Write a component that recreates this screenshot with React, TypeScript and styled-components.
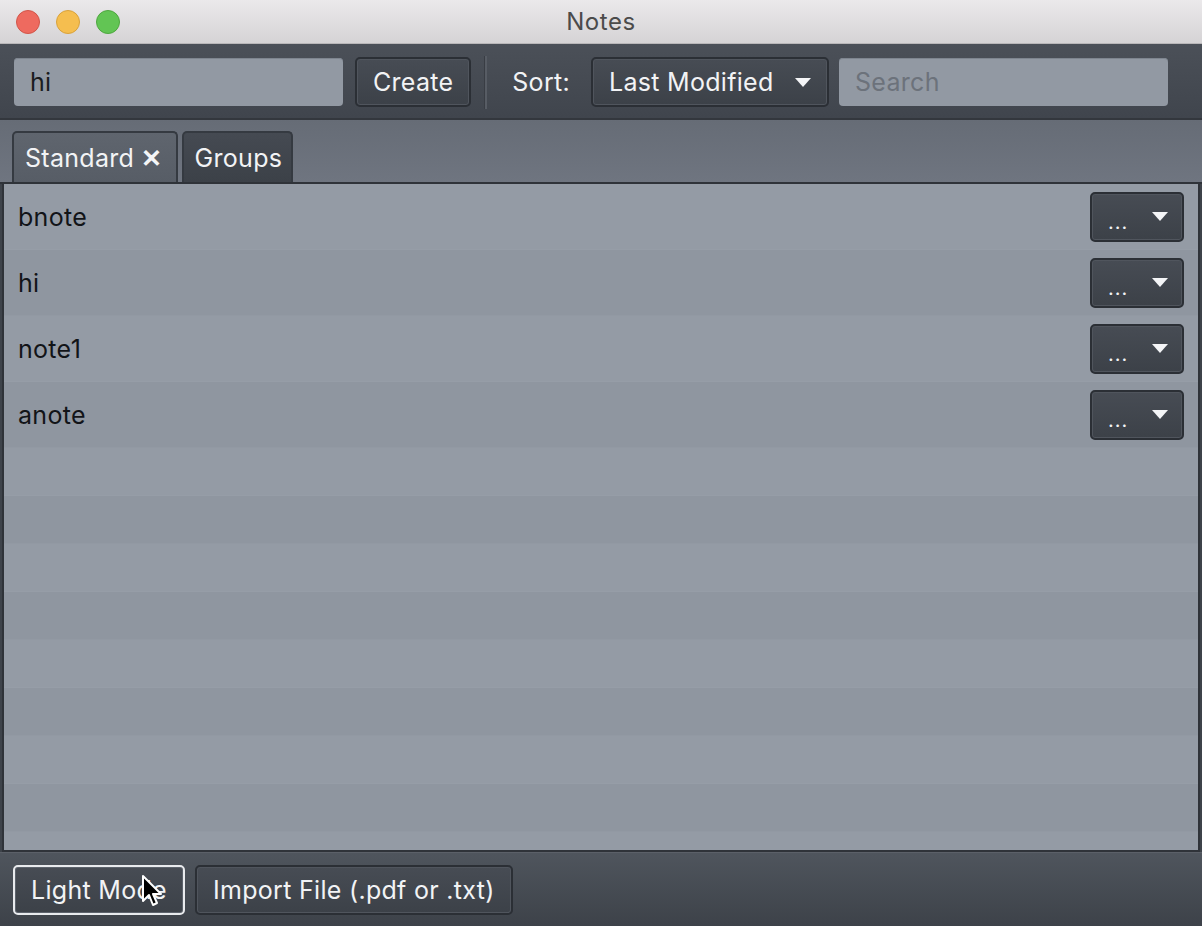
import React from 'react';
import styled, { createGlobalStyle } from 'styled-components';

const GlobalStyle = createGlobalStyle`
  html, body {
    margin: 0;
    padding: 0;
    background: #3e434a;
  }
  * {
    box-sizing: border-box;
  }
`;

const Window = styled.div`
  width: 1202px;
  height: 926px;
  display: flex;
  flex-direction: column;
  font-family: Inter, "Open Sans", sans-serif;
  font-size: 25px;
  letter-spacing: 0.3px;
  overflow: hidden;
  position: relative;
  border-radius: 0 0 10px 10px;
  background: #3e434a;
`;

const TitleBar = styled.div`
  height: 44px;
  flex: none;
  display: flex;
  align-items: center;
  position: relative;
  padding-left: 16px;
  gap: 16px;
  background: linear-gradient(#ebe9eb, #d5d3d5);
  border-bottom: 1px solid #b9b7b9;
`;

const Light = styled.span<{ $color: string; $edge: string }>`
  width: 24px;
  height: 24px;
  border-radius: 50%;
  background: ${(p) => p.$color};
  border: 1px solid ${(p) => p.$edge};
`;

const Title = styled.div`
  position: absolute;
  left: 0;
  right: 0;
  text-align: center;
  font-size: 24px;
  letter-spacing: 0.6px;
  color: #4b4b4b;
  pointer-events: none;
`;

const Toolbar = styled.div`
  height: 76px;
  flex: none;
  display: flex;
  align-items: center;
  padding: 2px 34px 0 14px;
  background: linear-gradient(#4b5058, #40454d);
  border-bottom: 2px solid #33373d;
`;

const Field = styled.div<{ $width: number; $placeholder?: boolean }>`
  width: ${(p) => p.$width}px;
  height: 48px;
  flex: none;
  border-radius: 4px;
  background: #9299a3;
  display: flex;
  align-items: center;
  padding-left: 16px;
  color: ${(p) => (p.$placeholder ? '#6c727b' : '#1a1c20')};
  box-shadow: inset 0 1px 0 #7e858f;
`;

const Button = styled.div<{ $focused?: boolean }>`
  height: 50px;
  flex: none;
  display: flex;
  align-items: center;
  padding: 0 16px;
  border-radius: 5px;
  background: linear-gradient(#474c54, #3c4148);
  border: 2px solid ${(p) => (p.$focused ? '#e9ebee' : '#2b2f35')};
  box-shadow: inset 0 0 0 1px ${(p) => (p.$focused ? '#5d636c' : '#50555d')};
  color: #f2f3f5;
  white-space: nowrap;
`;

const Separator = styled.div`
  width: 4px;
  height: 53px;
  margin: 0 25px 0 13px;
  background: #575c64;
  border-left: 1px solid #393d44;
`;

const Label = styled.span`
  color: #f2f3f5;
  margin-right: 21px;
`;

const Select = styled(Button)`
  width: 238px;
  justify-content: space-between;
  padding: 0 16px 0 16px;
  margin-right: 10px;
`;

const Caret = styled.span`
  width: 0;
  height: 0;
  border-left: 8px solid transparent;
  border-right: 8px solid transparent;
  border-top: 9px solid #f4f5f7;
`;

const TabStrip = styled.div`
  height: 64px;
  flex: none;
  display: flex;
  align-items: flex-end;
  gap: 4px;
  padding: 0 12px;
  background: linear-gradient(#666c76, #6f7580);
  border-bottom: 2px solid #2f3339;
`;

const Tab = styled.div<{ $active?: boolean }>`
  height: 51px;
  display: flex;
  align-items: center;
  gap: 7px;
  padding: ${(p) => (p.$active ? '0 13px 0 11px' : '0 9px 0 11px')};
  border: 2px solid #353a41;
  border-bottom: none;
  border-radius: 5px 5px 0 0;
  background: ${(p) => (p.$active ? 'linear-gradient(#5f656e, #575d66)' : 'linear-gradient(#454a52, #3c4148)')};
  color: #f2f3f5;
`;

const Close = styled.span`
  font-size: 25px;
  font-weight: 700;
  color: #f4f5f7;
`;

const List = styled.div`
  flex: 1;
  display: flex;
  flex-direction: column;
  margin: 0 2px;
  border-left: 2px solid #2f3339;
  border-right: 2px solid #2f3339;
  border-bottom: 2px solid #2f3339;
  background: #949ba5;
  overflow: hidden;
`;

const Row = styled.div<{ $odd: boolean; $height: number }>`
  height: ${(p) => p.$height}px;
  flex: none;
  display: flex;
  align-items: center;
  justify-content: space-between;
  padding: 0 14px 0 14px;
  background: ${(p) => (p.$odd ? '#8f96a0' : '#949ba5')};
  border-bottom: 1px solid ${(p) => (p.$odd ? '#9299a3' : '#969da7')};
`;

const RowName = styled.span`
  color: #121418;
`;

const MenuButton = styled(Button)`
  width: 94px;
  justify-content: space-between;
  padding: 0 14px 0 16px;
`;

const Dots = styled.span`
  font-size: 20px;
  letter-spacing: 1px;
  margin-top: 10px;
`;

const BottomBar = styled.div`
  height: 74px;
  flex: none;
  display: flex;
  align-items: center;
  gap: 10px;
  padding: 0 13px;
  background: linear-gradient(#4f555d, #3d4249);
  border-top: 1px solid #5b6068;
`;

const Cursor = styled.svg`
  position: absolute;
  left: 141px;
  top: 874px;
`;

const notes = ['bnote', 'hi', 'note1', 'anote'];

const App: React.FC = () => {
  return (
    <>
      <GlobalStyle />
      <Window>
        <TitleBar>
          <Light $color="#ee6a5f" $edge="#d25549" />
          <Light $color="#f5be4f" $edge="#d9a23b" />
          <Light $color="#62c554" $edge="#4ea73f" />
          <Title>Notes</Title>
        </TitleBar>
        <Toolbar>
          <Field $width={329}>hi</Field>
          <Button style={{ marginLeft: 12 }}>Create</Button>
          <Separator />
          <Label>Sort:</Label>
          <Select>
            Last Modified
            <Caret />
          </Select>
          <Field $width={329} $placeholder>
            Search
          </Field>
        </Toolbar>
        <TabStrip>
          <Tab $active>
            Standard
            <Close>✕</Close>
          </Tab>
          <Tab>Groups</Tab>
        </TabStrip>
        <List>
          {notes.map((name, i) => (
            <Row key={name} $odd={i % 2 === 1} $height={66}>
              <RowName>{name}</RowName>
              <MenuButton>
                <Dots>...</Dots>
                <Caret />
              </MenuButton>
            </Row>
          ))}
          {Array.from({ length: 9 }).map((_, i) => (
            <Row key={`e${i}`} $odd={i % 2 === 1} $height={48} />
          ))}
        </List>
        <BottomBar>
          <Button $focused>Light Mode</Button>
          <Button>Import File (.pdf or .txt)</Button>
        </BottomBar>
        <Cursor width="22" height="36" viewBox="0 0 22 36">
          <path
            d="M2 2 L2 27 L8 21 L12 31 L16 29 L12 20 L20 20 Z"
            fill="#000"
            stroke="#fff"
            strokeWidth="2"
            strokeLinejoin="round"
          />
        </Cursor>
      </Window>
    </>
  );
};

export default App;
